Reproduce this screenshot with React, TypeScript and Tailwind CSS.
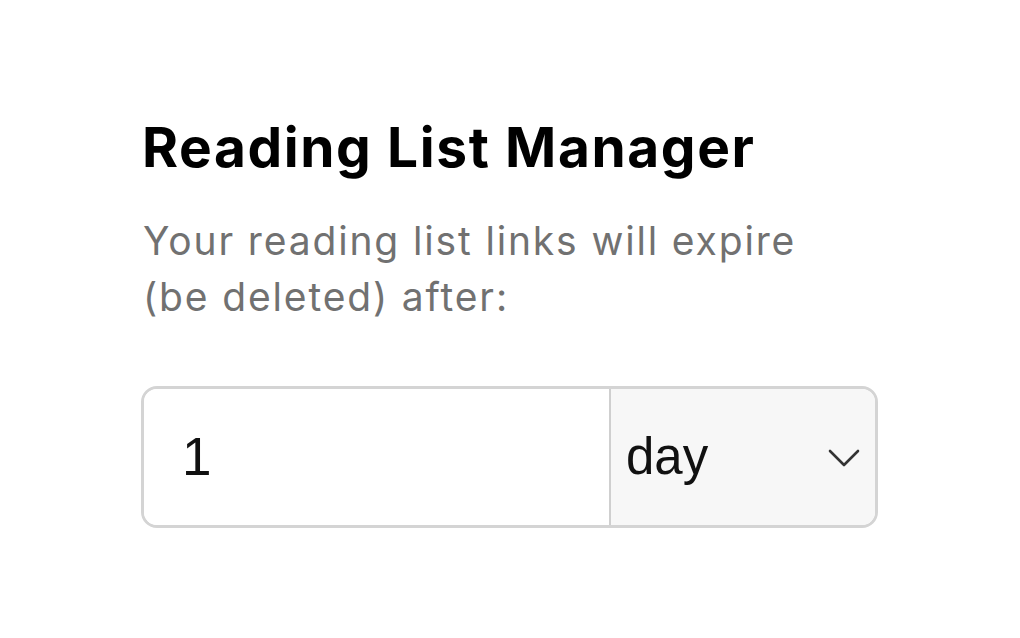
import React from "react";

export default function App() {
  return (
    <div className="w-[1020px] h-[638px] bg-white overflow-hidden">
      <div className="pl-[141px] pt-[120px] flex flex-col">
        <h1 className="pl-[1px] text-[55px] leading-[55px] font-bold text-black tracking-[1.6px]" style={{ fontFamily: "Inter, 'Noto Sans', sans-serif" }}>
          Reading List Manager
        </h1>
        <p className="mt-[38px] pl-[2px] text-[39px] leading-[56px] text-[#717171] tracking-[1.85px] w-[760px]" style={{ fontFamily: "Inter, 'Noto Sans', sans-serif" }}>
          Your reading list links will expire
          <br />
          (be deleted) after:
        </p>
        <div className="mt-[61px] flex w-[737px] h-[142px] border-[3px] border-[#d4d4d4] rounded-[16px] overflow-hidden" style={{ fontFamily: "'Liberation Sans', Arial, sans-serif" }}>
          <div className="w-[465px] h-full bg-white flex items-center pl-[38px] text-[53px] text-[#111111]">
            1
          </div>
          <div className="flex-1 h-full bg-[#f7f7f7] border-l-[2px] border-[#cfcfcf] flex items-center justify-between pl-[15px] pr-[14px] text-[51px] text-[#111111]">
            <span>day</span>
            <svg width="34" height="22" viewBox="0 0 34 22" fill="none" className="mt-[2px]">
              <path d="M3 4 L17 18 L31 4" stroke="#333333" strokeWidth="2.6" strokeLinecap="round" strokeLinejoin="round" />
            </svg>
          </div>
        </div>
      </div>
    </div>
  );
}
